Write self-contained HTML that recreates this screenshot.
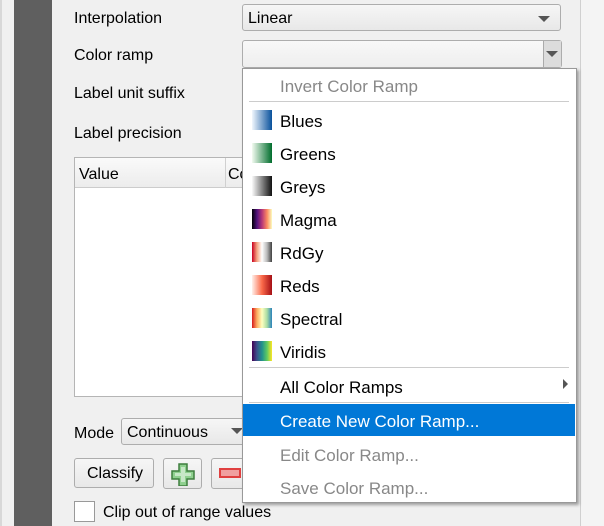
<!DOCTYPE html>
<html><head><style>
*{margin:0;padding:0;box-sizing:border-box}
body{width:604px;height:526px;background:#f0f0f0;position:relative;overflow:hidden;font-family:"Liberation Sans",sans-serif;font-size:16px;color:#000}
.a{position:absolute}
.lbl{position:absolute;left:74px}
.cb{position:absolute;background:linear-gradient(#f6f6f6,#e8e8e8);border:1px solid #adadad;border-radius:3px}
.tri{position:absolute;width:0;height:0;border-left:6px solid transparent;border-right:6px solid transparent;border-top:6px solid #555}
.it{position:absolute;left:280px;font-size:17px}
.sw{position:absolute;left:252px;width:20px;height:20px}
.sep{position:absolute;left:249px;width:320px;height:1px;background:#ccc}
.g{color:#888}
</style></head><body>
<div class="a" style="left:0;top:0;width:2px;height:526px;background:#d8d8d8"></div>
<div class="a" style="left:14px;top:0;width:38px;height:526px;background:#5f5f5f"></div>
<div class="a" style="left:580px;top:0;width:1px;height:526px;background:#d0d0d0"></div>
<div class="a" style="left:581px;top:0;width:23px;height:526px;background:#f4f4f4"></div>

<div class="lbl" style="top:10px">Interpolation</div>
<div class="lbl" style="top:47px">Color ramp</div>
<div class="lbl" style="top:85px">Label unit suffix</div>
<div class="lbl" style="top:125px">Label precision</div>

<div class="cb" style="left:242px;top:4px;width:319px;height:27px"><span class="a" style="left:5px;top:5px">Linear</span><div class="tri" style="left:295px;top:11px"></div></div>
<div class="cb" style="left:242px;top:40px;width:320px;height:28px;background:linear-gradient(#f8f8f8,#eee)"></div>
<div class="a" style="left:543px;top:41px;width:18px;height:26px;background:#dcdcdc;border-left:1px solid #aaa"></div>
<div class="tri" style="left:546px;top:51px"></div>

<div class="a" style="left:74px;top:157px;width:180px;height:240px;background:#fff;border:1px solid #b5b5b5"></div>
<div class="a" style="left:75px;top:158px;width:170px;height:30px;background:linear-gradient(#fafafa,#ececec);border-bottom:1px solid #ccc"><span class="a" style="left:4px;top:8px">Value</span></div>
<div class="a" style="left:225px;top:158px;width:1px;height:30px;background:#d0d0d0"></div>
<span class="a" style="left:228px;top:166px">Co</span>

<div class="lbl" style="top:425px">Mode</div>
<div class="cb" style="left:121px;top:418px;width:125px;height:27px"><span class="a" style="left:5px;top:5px">Continuous</span></div>
<div class="tri" style="left:231px;top:428px"></div>
<div class="cb" style="left:74px;top:458px;width:80px;height:30px"><span class="a" style="left:12px;top:6px">Classify</span></div>
<div class="cb" style="left:163px;top:458px;width:39px;height:31px"></div>
<svg class="a" style="left:168px;top:462px" width="30" height="24"><path d="M11 2h8v7h7v8h-7v7h-8v-7H4V9h7z" fill="#8fd08f" stroke="#3e7e3e" stroke-width="1.5"/><path d="M13 5h4v6h6v3h-6v6h-4v-6H7v-3h6z" fill="#fff" opacity=".5"/></svg>
<div class="cb" style="left:211px;top:458px;width:35px;height:31px"></div>
<div class="a" style="left:219px;top:468px;width:22px;height:10px;background:#f0a0a0;border:2px solid #e04040"></div>
<div class="a" style="left:74px;top:501px;width:21px;height:21px;background:#fff;border:1px solid #999"></div>
<span class="a" style="left:103px;top:504px">Clip out of range values</span>

<div class="a" style="left:242px;top:68px;width:335px;height:435px;background:#fff;border:1px solid #999;box-shadow:2px 2px 3px rgba(0,0,0,.35)"></div>
<div class="it g" style="top:77px">Invert Color Ramp</div>
<div class="sep" style="top:101px"></div>
<div class="sw" style="top:110px;background:linear-gradient(90deg,#f0f6fd,#08519c)"></div><div class="it" style="top:112px">Blues</div>
<div class="sw" style="top:143px;background:linear-gradient(90deg,#f2fbf0,#006d2c)"></div><div class="it" style="top:145px">Greens</div>
<div class="sw" style="top:176px;background:linear-gradient(90deg,#fafafa,#111)"></div><div class="it" style="top:178px">Greys</div>
<div class="sw" style="top:209px;background:linear-gradient(90deg,#000004,#51127c,#b73779,#fc8961,#fcfdbf)"></div><div class="it" style="top:211px">Magma</div>
<div class="sw" style="top:242px;background:linear-gradient(90deg,#ca0020,#f4a582,#fff,#bababa,#404040)"></div><div class="it" style="top:244px">RdGy</div>
<div class="sw" style="top:275px;background:linear-gradient(90deg,#fff0ea,#fb6a4a,#a50f15)"></div><div class="it" style="top:277px">Reds</div>
<div class="sw" style="top:308px;background:linear-gradient(90deg,#d7191c,#fdae61,#ffffbf,#abdda4,#2b83ba)"></div><div class="it" style="top:310px">Spectral</div>
<div class="sw" style="top:341px;background:linear-gradient(90deg,#440154,#3b528b,#21918c,#5ec962,#fde725)"></div><div class="it" style="top:343px">Viridis</div>
<div class="sep" style="top:367px"></div>
<div class="it" style="top:378px">All Color Ramps</div>
<div class="a" style="left:563px;top:379px;border-top:5px solid transparent;border-bottom:5px solid transparent;border-left:5px solid #555"></div>
<div class="sep" style="top:402px"></div>
<div class="a" style="left:243px;top:404px;width:332px;height:32px;background:#0078d7"></div>
<div class="it" style="top:412px;color:#fff">Create New Color Ramp...</div>
<div class="it g" style="top:446px">Edit Color Ramp...</div>
<div class="it g" style="top:479px">Save Color Ramp...</div>
</body></html>
